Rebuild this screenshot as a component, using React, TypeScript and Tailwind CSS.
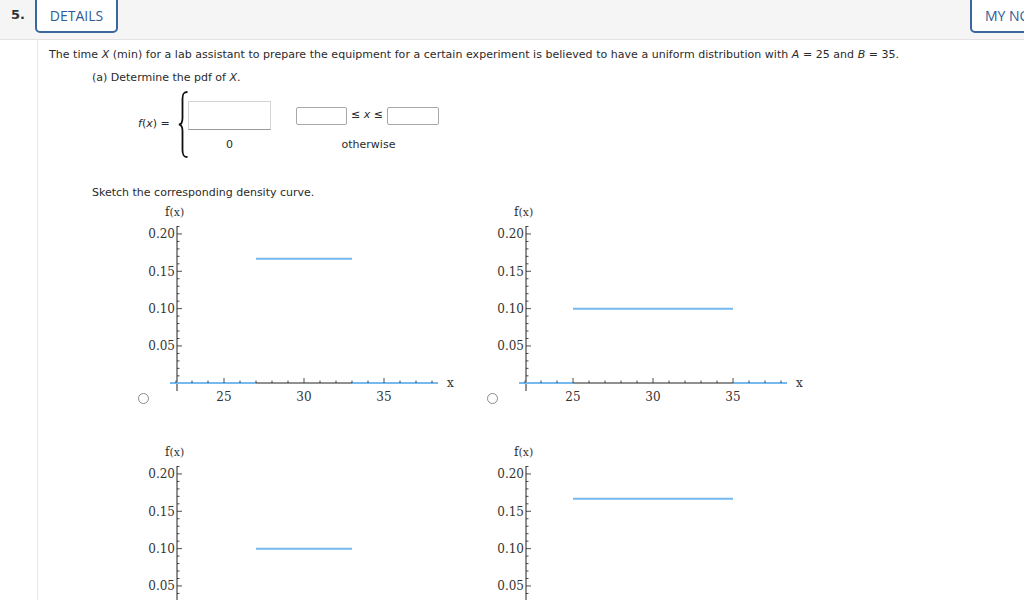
import React from "react";

type G = { a: number; b: number; h: number };

function Graph({ a, b, h }: G) {
  const X = (u: number) => 76 + 16 * (u - 25);
  const Y = (v: number) => 182.3 - 746.7 * v;
  const yMinor: number[] = [];
  for (let i = 1; i <= 21; i++) yMinor.push(i / 100);
  const xMinor: number[] = [];
  for (let u = 22; u <= 38; u++) xMinor.push(u);
  const blue = "#74b9ef";
  return (
    <svg width="320" height="210" viewBox="0 0 320 210" className="block overflow-visible">
      <g fontFamily='"DejaVu Serif", serif' fill="#333" fontSize="12">
        <text x="17" y="15">
          f<tspan fontSize="11">(x)</tspan>
        </text>
        {[0.2, 0.15, 0.1, 0.05].map((v) => (
          <text key={v} x="27" y={Y(v) + 4.5} textAnchor="end">
            {v.toFixed(2)}
          </text>
        ))}
        {[25, 30, 35].map((u) => (
          <text key={u} x={X(u)} y="200" textAnchor="middle">
            {u}
          </text>
        ))}
        <text x="299" y="186">x</text>
      </g>
      <line x1="29" y1="25" x2="29" y2="190" stroke="#222" strokeWidth="1" />
      <line x1="22" y1="182" x2="290" y2="182" stroke="#222" strokeWidth="1" />
      {yMinor.map((v, i) => (
        <line
          key={i}
          x1="29"
          x2={(i + 1) % 5 === 0 ? 34 : 31.5}
          y1={Y(v)}
          y2={Y(v)}
          stroke="#222"
          strokeWidth="0.8"
        />
      ))}
      <line x1="22" y1="182" x2={X(a)} y2="182" stroke={blue} strokeWidth="2" />
      <line x1={X(b)} y1="182" x2="290" y2="182" stroke={blue} strokeWidth="2" />
      {xMinor.map((u) => (
        <line
          key={u}
          x1={X(u)}
          x2={X(u)}
          y1="182"
          y2={u % 5 === 0 ? 177 : 179.5}
          stroke="#222"
          strokeWidth="0.8"
        />
      ))}
      <line x1={X(a)} y1={Y(h)} x2={X(b)} y2={Y(h)} stroke={blue} strokeWidth="2" />
    </svg>
  );
}

function Cell(g: G) {
  return (
    <div className="flex items-start w-[349px]">
      <span className="mt-[192px] w-[11px] h-[11px] rounded-full border border-[#8a8a8a] bg-white shrink-0" />
      <div className="-ml-[1px]">
        <Graph {...g} />
      </div>
    </div>
  );
}

function Brace() {
  return (
    <svg width="10" height="67" viewBox="0 0 10 67" className="block">
      <path
        d="M9.5 1 C5.5 1 4.5 3 4.5 8 L4.5 27 C4.5 31 3 33.5 0.8 33.5 C3 33.5 4.5 36 4.5 40 L4.5 59 C4.5 64 5.5 66 9.5 66"
        fill="none"
        stroke="#111"
        strokeWidth="1.8"
      />
    </svg>
  );
}

export default function App() {
  return (
    <div
      className="w-[1024px] h-[600px] bg-white overflow-hidden text-[#2a2a2a]"
      style={{ fontFamily: '"DejaVu Sans", Verdana, sans-serif' }}
    >
      <header className="h-[40px] bg-[#f5f5f5] border-b border-[#e2e2e2] flex items-start relative overflow-hidden">
        <div className="w-[35px] h-[30px] flex items-center pl-[11px] text-[13px] font-bold text-[#333]">5.</div>
        <div
          className="-mt-[2px] h-[35px] w-[83px] border-2 border-[#3b66a0] rounded-b-[5px] bg-white flex items-center justify-center text-[#2f5b98] text-[14px]"
          style={{ fontFamily: '"Open Sans", sans-serif' }}
        >
          DETAILS
        </div>
        <div className="flex-1" />
        <div
          className="-mt-[2px] h-[35px] w-[100px] -mr-[46px] border-2 border-[#3b66a0] rounded-b-[5px] bg-white flex items-center pl-[13px] text-[#2f5b98] text-[14px] whitespace-nowrap"
          style={{ fontFamily: '"Open Sans", sans-serif' }}
        >
          MY NOTES
        </div>
      </header>
      <main className="ml-[37px] border-l border-[#e6e6e6] h-[560px] pl-[11px] pt-[7px] text-[11px]">
        <p className="leading-[16px] whitespace-nowrap tracking-[0.035px]">
          The time <i>X</i> (min) for a lab assistant to prepare the equipment for a certain experiment is believed to
          have a uniform distribution with <i>A</i> = 25 and <i>B</i> = 35.
        </p>
        <p className="mt-[7px] ml-[43px] leading-[16px]">
          (a) Determine the pdf of <i>X</i>.
        </p>
        <div className="mt-[5px] ml-[89px] flex items-center h-[67px]">
          <span className="w-[40px] text-[11px]">
            <i>f</i>(<i>x</i>) =
          </span>
          <Brace />
          <div className="ml-[0px] grid grid-cols-[83px_145px] gap-x-[25px] gap-y-[8px] pt-[4px]">
            <div className="h-[29px] border border-[#d4d4d4] border-b-[#9a9a9a] bg-white" />
            <div className="flex items-center h-[29px]">
              <div className="w-[51px] h-[18px] border border-[#a8a8a8] rounded-[2px] bg-white" />
              <span className="mx-[4px] text-[11px]">
                ≤ <i>x</i> ≤
              </span>
              <div className="w-[52px] h-[18px] border border-[#a8a8a8] rounded-[2px] bg-white" />
            </div>
            <div className="text-center leading-[14px]">0</div>
            <div className="text-center leading-[14px]">otherwise</div>
          </div>
        </div>
        <p className="mt-[28px] ml-[43px] leading-[14px]">Sketch the corresponding density curve.</p>
        <div className="mt-[1px] ml-[89px] grid grid-cols-[349px_349px] gap-y-[30px]">
          <Cell a={27} b={33} h={1 / 6} />
          <Cell a={25} b={35} h={0.1} />
          <Cell a={27} b={33} h={0.1} />
          <Cell a={25} b={35} h={1 / 6} />
        </div>
      </main>
    </div>
  );
}
